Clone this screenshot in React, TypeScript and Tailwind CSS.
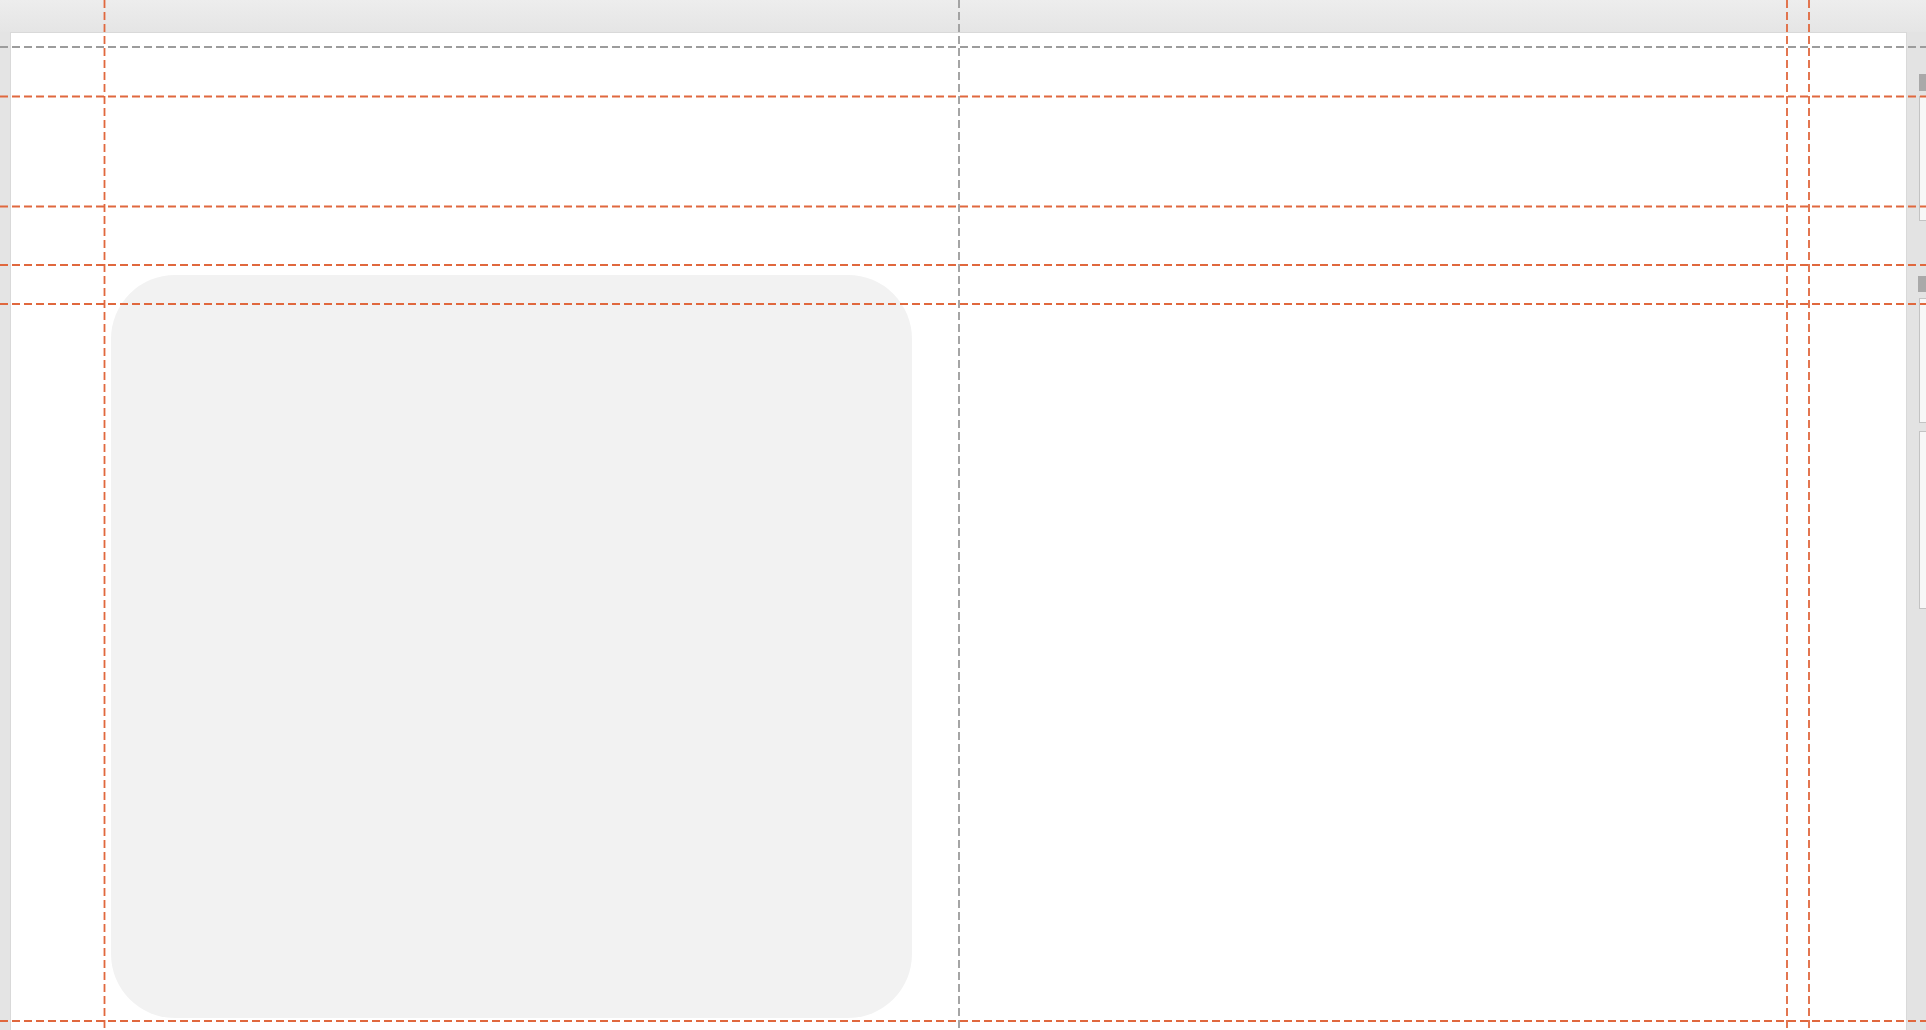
import React from "react"

// guide positions in page pixels
const vGuides = [
  { x: 104.5, c: "#e0683e" },
  { x: 959, c: "#9c9c9c" },
  { x: 1787, c: "#e0683e" },
  { x: 1809, c: "#e0683e" },
]
const hGuides = [
  { y: 47, c: "#9c9c9c" },
  { y: 96.5, c: "#e0683e" },
  { y: 206.5, c: "#e0683e" },
  { y: 265, c: "#e0683e" },
  { y: 304, c: "#e0683e" },
  { y: 1021, c: "#e0683e" },
]

function Guides() {
  return (
    <svg className="absolute inset-0 pointer-events-none" width={1926} height={1030}>
      {hGuides.map((g, i) => (
        <line key={"h" + i} x1={0} x2={1926} y1={g.y} y2={g.y} stroke={g.c} strokeWidth={1.8} strokeDasharray="8 4" />
      ))}
      {vGuides.map((g, i) => (
        <line key={"v" + i} x1={g.x} x2={g.x} y1={0} y2={1030} stroke={g.c} strokeWidth={1.8} strokeDasharray="8 4" />
      ))}
    </svg>
  )
}

export default function App() {
  return (
    <div className="relative w-[1926px] h-[1030px] overflow-hidden bg-[#e4e4e4] flex flex-col">
      <div className="h-[32px] shrink-0 bg-gradient-to-b from-[#ededed] to-[#e5e5e5]" />
      <div className="flex flex-1 min-h-0">
        <div className="w-[10px] shrink-0 bg-[#e4e4e4]" />
        <main className="flex-1 bg-white border border-b-0 border-[#d9d9d9] pl-[100px] pt-[242px]">
          <div className="w-[801px] h-[743px] rounded-[64px] bg-[#f2f2f2]" />
        </main>
        <aside className="w-[19px] shrink-0 bg-[#e3e3e3] pl-[12px] pt-[42px] flex flex-col">
          <div className="h-[17px] bg-[#a9a9a9]" />
          <div className="mt-[5px] h-[125px] border border-r-0 border-[#c3c3c3] bg-[#f7f7f7]" />
          <div className="mt-[55px] h-[16px] bg-[#a9a9a9] -ml-px" />
          <div className="mt-[6px] h-[125px] border border-r-0 border-[#c3c3c3] bg-[#f7f7f7]" />
          <div className="mt-[8px] h-[178px] border border-r-0 border-[#c3c3c3] bg-[#f7f7f7]" />
        </aside>
      </div>
      <Guides />
    </div>
  )
}
